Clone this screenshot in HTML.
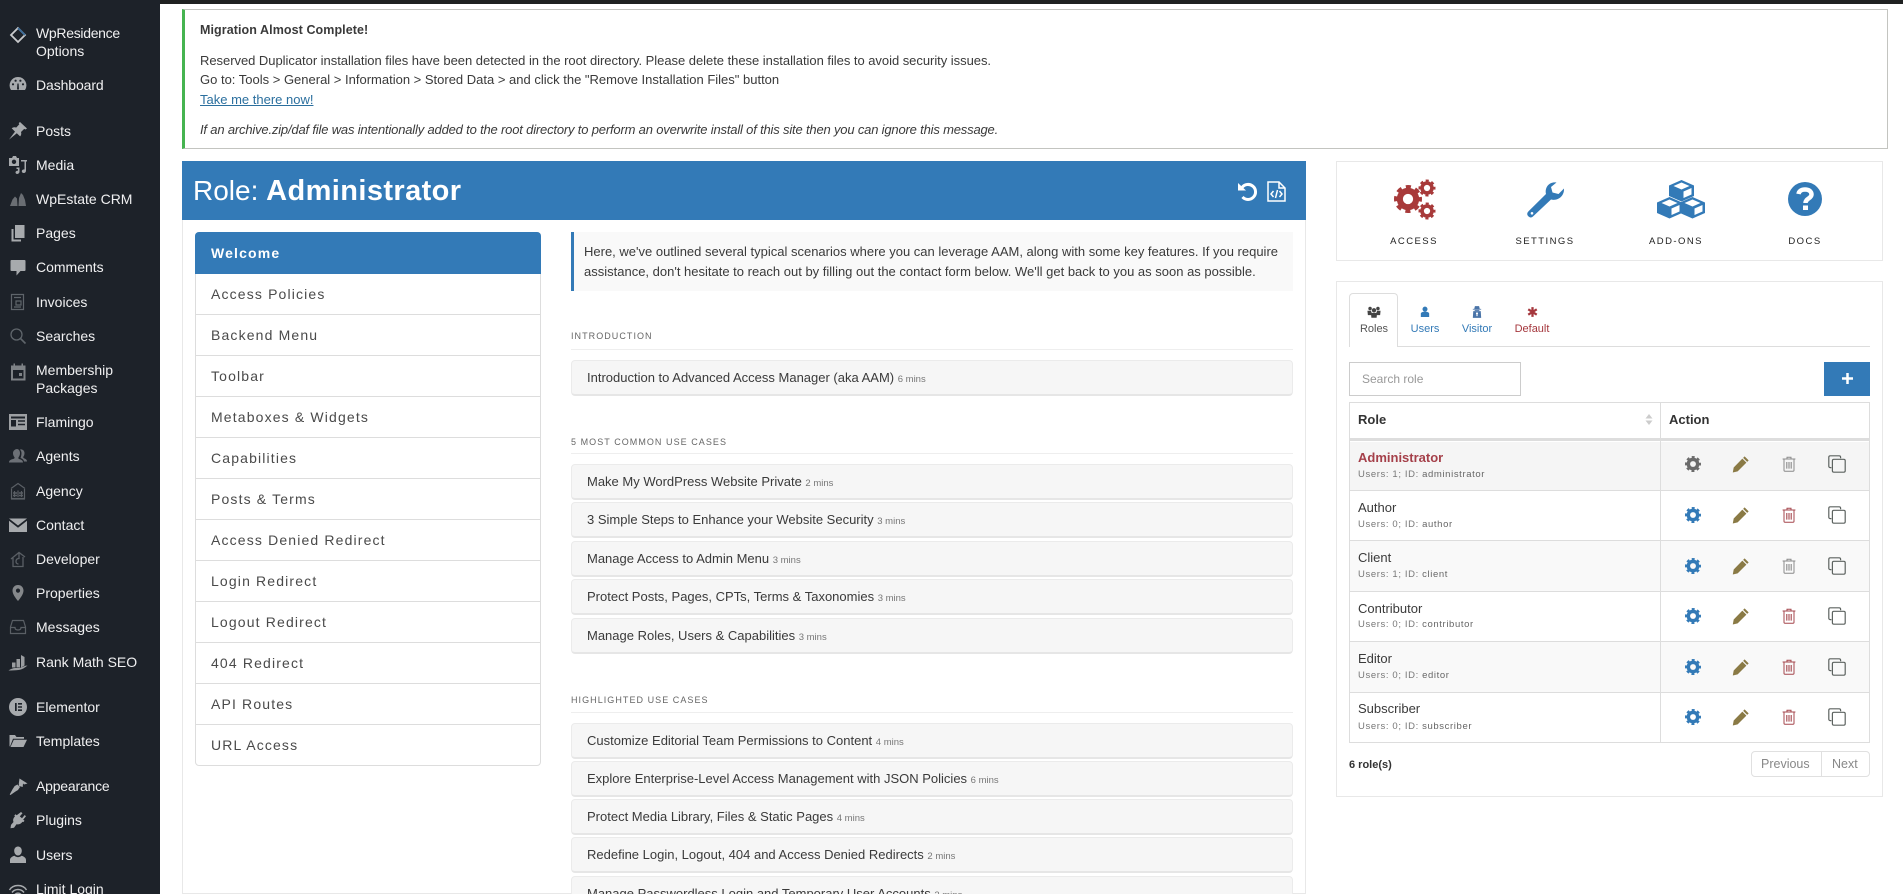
<!DOCTYPE html>
<html><head><meta charset="utf-8"><title>Role: Administrator</title>
<style>
html,body{margin:0;padding:0;width:1904px;height:894px;overflow:hidden;background:#fff;font-family:"Liberation Sans",sans-serif;color:#333}
#p{position:relative;width:1904px;height:894px;overflow:hidden;background:#fff}
.a{position:absolute}
.t{position:absolute;white-space:nowrap;line-height:20px;margin:0}
.s{color:#f0f0f1;font-size:14px;left:36px}
.n{font-size:13px;color:#3a3a3a}
.m{font-size:14px;letter-spacing:1.15px;left:211px;color:#4a4a4a}
.h{font-size:9px;letter-spacing:1.05px;left:571px;color:#666}
.hr{position:absolute;left:571px;width:722px;height:1px;background:#eee}
.it{position:absolute;left:571px;width:722px;height:36px;box-sizing:border-box;background:#f6f6f6;border:1px solid #ebebeb;border-bottom:2px solid #e6e6e6;border-radius:4px;font-size:13px;color:#3a3a3a;line-height:33px;padding-left:15px;white-space:nowrap}
.it small{font-size:9.5px;color:#777}
.lb{font-size:9.5px;letter-spacing:1.45px;color:#222;transform:translateX(-50%)}
.tb{font-size:11px;transform:translateX(-50%)}
.rn{font-size:13px;left:1358px;color:#3a3a3a}
.rs{font-size:9.5px;left:1358px;color:#777;letter-spacing:.62px}
.rs b{font-weight:normal;color:#666}
.hl{position:absolute;left:1349px;width:520px;height:1px;background:#ddd}
.i{position:absolute;overflow:visible}
svg{display:block}
.c{color:#a7aaad}.d{color:#5f656b}
</style></head><body><div id="p">
<svg width="0" height="0" style="position:absolute"><defs>
<symbol id="gear" viewBox="0 0 24 24"><circle cx="12" cy="12" r="7" fill="none" stroke="currentColor" stroke-width="5.2"/><circle cx="12" cy="12" r="10" fill="none" stroke="currentColor" stroke-width="4" stroke-dasharray="4.2 3.654" stroke-dashoffset="2.1"/></symbol>
<symbol id="pen" viewBox="0 0 16 16"><path fill="currentColor" d="M11.2 1.2l3.6 3.6-1.3 1.3-3.6-3.6zM9.2 3.2l3.6 3.6-7.8 7.8-4.3.9.8-4.4z"/></symbol>
<symbol id="trash" viewBox="0 0 14 16"><path fill="none" stroke="currentColor" stroke-width="1" d="M.6 3h12.8M5 3V1.200h4V3M2 3v11.200c0 .6.4 1 1 1h8c.6 0 1-.4 1-1V3"/><path fill="none" stroke="currentColor" stroke-width="1.1" d="M4.800 6v6.600M7 6v6.600M9.200 6v6.600"/></symbol>
<symbol id="copy" viewBox="0 0 18 18"><path fill="none" stroke="currentColor" stroke-width="1.2" d="M3.4 12.600H2.200c-.8 0-1.400-.6-1.400-1.400V2.200C.8 1.400 1.400.8 2.200.8h9c.8 0 1.400.6 1.400 1.400v1.100"/><rect x="4.400" y="4.300" width="12.800" height="12.900" rx="1.400" fill="none" stroke="currentColor" stroke-width="1.200"/></symbol>
<symbol id="cube" viewBox="0 0 25 22"><path fill="#337ab7" d="M12.500 0L25 5.500V16L12.500 21.500 0 16V5.500z"/><path fill="#fff" d="M12.500 2.500L20.500 6l-8 3.500L4.500 6zM14.500 11.500L22.500 8v6.500L14.500 18z"/></symbol>
</defs></svg>

<!-- top bar & sidebar -->
<div class="a" style="left:0;top:0;width:1903px;height:4px;background:#1f2121"></div>
<div class="a" style="left:0;top:0;width:160px;height:894px;background:#1d2229"></div>

<svg class="i" style="left:8px;top:25px" width="20" height="20" viewBox="0 0 20 20"><path fill="none" stroke="#c9cbcd" stroke-width="1.800" d="M10 3L3 10l7 7 7-7z"/><path fill="none" stroke="#3c6d9b" stroke-width="1.800" d="M10 3l7 7"/></svg>
<svg class="i c" style="left:8px;top:75px" width="20" height="20" viewBox="0 0 20 20"><path fill="currentColor" fill-rule="evenodd" d="M10 2a8.400 8.400 0 0 0-7 13h14A8.400 8.400 0 0 0 10 2zM5 10.400a1.100 1.100 0 1 1 0-2.200 1.100 1.100 0 0 1 0 2.200zm2.600-3.600a1.100 1.100 0 1 1 0-2.200 1.100 1.100 0 0 1 0 2.200zM12.400 6.800a1.100 1.100 0 1 1 0-2.200 1.100 1.100 0 0 1 0 2.200zM15 10.400a1.100 1.100 0 1 1 0-2.200 1.100 1.100 0 0 1 0 2.200zM9 14.500l.4-6h1.200l.4 6z"/></svg>
<svg class="i c" style="left:8px;top:121px" width="20" height="20" viewBox="0 0 20 20"><path fill="currentColor" d="M12 1l7 6.500-1.600 1-1.200-.6-3.200 3.100c.6 2 .1 3.300-.9 4.400L8.800 12.200 1 18.600l6-8L3.700 7.300c1.200-1 2.700-1.400 4.600-.8l3-3.200-.6-1.200z"/></svg>
<svg class="i c" style="left:8px;top:155px" width="20" height="20" viewBox="0 0 20 20"><path fill="currentColor" fill-rule="evenodd" d="M1 3h3l1-2h3l1 2h2v8H1zm5 6a2.200 2.200 0 1 0 0-4.400A2.200 2.200 0 0 0 6 9z"/><path fill="currentColor" d="M13 5h6v1.500h-1v9c0 1.500-1 2.500-2.300 2.500-1.100 0-1.900-.7-1.900-1.700 0-1.100 1-1.900 2.700-1.900V6.500H13zM8.500 12.500h3v4.300c0 1.200-1 2.200-2.200 2.200-1.100 0-1.800-.7-1.800-1.600 0-1 .9-1.700 1.900-1.700h.5V14H8.500z"/></svg>
<svg class="i" style="left:8px;top:189px;color:#6a6e73" width="20" height="20" viewBox="0 0 20 20"><path fill="currentColor" d="M2 17l2.500-6.500L7 7.500l2 2 .5 7.500zM10.500 17l.5-8 2-5 2 2 2 5 1 6z"/></svg>
<svg class="i c" style="left:8px;top:223px" width="20" height="20" viewBox="0 0 20 20"><path fill="currentColor" d="M7 2h9.500v13H7z"/><path fill="currentColor" d="M3.500 6H5.500v10.500H13V18.500H3.500z"/></svg>
<svg class="i c" style="left:8px;top:257px" width="20" height="20" viewBox="0 0 20 20"><path fill="currentColor" d="M3.500 3h13c.6 0 1 .4 1 1v9c0 .6-.4 1-1 1h-4L8.500 18.500V14H3.500c-.6 0-1-.4-1-1V4c0-.6.4-1 1-1z"/></svg>
<svg class="i" style="left:8px;top:292px;color:#5f656b" width="20" height="20" viewBox="0 0 20 20"><path fill="none" stroke="currentColor" stroke-width="1.200" d="M3.500 2.500h12v15h-12zM6 5.500h7M8 9h5v4H8zM6 15h7"/></svg>
<svg class="i" style="left:8px;top:326px;color:#5f656b" width="20" height="20" viewBox="0 0 20 20"><circle cx="8.500" cy="8.500" r="5.500" fill="none" stroke="currentColor" stroke-width="1.300"/><path stroke="currentColor" stroke-width="1.600" d="M12.500 12.500l5 5"/></svg>
<svg class="i" style="left:8px;top:362px;color:#7e8286" width="20" height="20" viewBox="0 0 20 20"><path fill="none" stroke="currentColor" stroke-width="2" d="M4 5h12.500v12.500H4z"/><path fill="currentColor" d="M3 3.500h14.500V8H3zM5.500 1.500h1.500v3H5.500zM13.500 1.500H15v3h-1.500zM11 11h3v3h-3z"/></svg>
<svg class="i c" style="left:8px;top:412px;color:#9da0a3" width="20" height="20" viewBox="0 0 20 20"><path fill="currentColor" fill-rule="evenodd" d="M1 2h18v16H1zM3 8v6.500h5V8zm7 .2v1.600h7V8.200zm0 3.500v1.600h7v-1.600zM3 4.500v2h14v-2z"/></svg>
<svg class="i" style="left:8px;top:446px;color:#6c7076" width="20" height="20" viewBox="0 0 20 20"><path fill="currentColor" d="M5 13c-2.500.6-4 1.500-4 3.500h14c0-2-1.500-2.900-4-3.500-.8-.3-.8-1.200-.3-2 .9-1.200 1.300-2.500 1.300-4 0-2.500-1.500-4-3-4S5 4.500 5 7c0 1.500.4 2.800 1.300 4 .5.800.5 1.700-1.300 2z"/><path fill="currentColor" d="M12 3.500c2-.5 4.500.8 4.500 3.500 0 1.500-.4 2.800-1.200 3.800-.3.800.2 1.300 1.200 1.700 1.400.6 2.500 1.300 2.500 3h-3c-.3-2-2-3-3.500-3.500.8-2 1.500-5 .5-7z"/></svg>
<svg class="i" style="left:8px;top:481px;color:#5a5f65" width="20" height="20" viewBox="0 0 20 20"><path fill="none" stroke="currentColor" stroke-width="1.200" d="M3 7.500L10 2.500l7 5M3.500 8v9.500h13V8M3 18h14M6.500 10v6M10 9.500v6.500M13.500 10v6"/><path fill="none" stroke="currentColor" stroke-width="1.500" d="M5 12h4M11 12h4M5 14.500h4M11 14.500h4"/></svg>
<svg class="i c" style="left:8px;top:515px" width="20" height="20" viewBox="0 0 20 20"><path fill="currentColor" d="M1 3.500h18l-9 7zM1 5.800l9 7 9-7V17H1z"/></svg>
<svg class="i" style="left:8px;top:549px;color:#5a5f65" width="20" height="20" viewBox="0 0 20 20"><path fill="none" stroke="currentColor" stroke-width="1.300" d="M3 10l8-6.500 6 4.500M5 9v8.500h10V8M11 3.500v6c-2 0-3 1.200-3 3 0 1.500 1 2.500 2.500 2.500"/></svg>
<svg class="i" style="left:8px;top:583px;color:#85888b" width="20" height="20" viewBox="0 0 20 20"><path fill="currentColor" fill-rule="evenodd" d="M10 2c3.200 0 5.500 2.400 5.500 5.500 0 3.500-3 7.500-5.500 10.500C7.500 15 4.500 11 4.500 7.500 4.500 4.400 6.800 2 10 2zm0 3.500a2.100 2.100 0 1 0 0 4.200 2.100 2.100 0 0 0 0-4.200z"/></svg>
<svg class="i" style="left:8px;top:617px;color:#5a5f65" width="20" height="20" viewBox="0 0 20 20"><path fill="none" stroke="currentColor" stroke-width="1.200" d="M2.500 10l2-6.500h11l2 6.500v6.500h-15zM2.500 10.500H7c0 1.800 1.300 2.500 3 2.500s3-.7 3-2.500h4.500"/></svg>
<svg class="i" style="left:8px;top:652px;color:#9a9da0" width="20" height="20" viewBox="0 0 20 20"><path fill="currentColor" d="M4 10.500h3.500v5H4zM8.500 7h3.500v8.500H8.500zM13 3l3.500 2v8.500L13 15.500zM.5 18.500c2-1.500 4.500-2.500 7-2.500s5 .3 8-1.500c1.300-.6 2.700-1 4-1-2.500 2-5 4-9 4.500-3.500.4-7 .5-10 .5z"/></svg>
<svg class="i" style="left:8px;top:697px;color:#a7aaad" width="20" height="20" viewBox="0 0 20 20"><path fill="currentColor" fill-rule="evenodd" d="M10 1a9 9 0 1 0 0 18 9 9 0 0 0 0-18zM7 6h1.700v8H7zm3 0h4v1.600h-4zm0 3.200h4v1.600h-4zm0 3.200h4V14h-4z"/></svg>
<svg class="i c" style="left:8px;top:731px" width="20" height="20" viewBox="0 0 20 20"><path fill="currentColor" d="M1.500 4h5.500l1.500 2h7.500v1.800H5L2 15.500 1.500 15zM5.800 8.800H19L15.500 16H2.500z"/></svg>
<svg class="i c" style="left:8px;top:776px" width="20" height="20" viewBox="0 0 20 20"><path fill="currentColor" d="M11.500 2.500l8 5-3.500 1-1-1-.3 3.500-3.700-1-.2-2.500zM9.500 8.500l2.500 2.500-2 3-2.500 1.500-5 3.500-.8-.5 3-5.500 2-3z"/></svg>
<svg class="i c" style="left:8px;top:810px" width="20" height="20" viewBox="0 0 20 20"><path fill="currentColor" d="M13 2l1.500 1.200-2.700 3.200 2.200 1.800 2.700-3.200L18 6.200l-2.800 3.400 1.300 1.200-1.200 1.300-.8-.4c-1.500 2.200-3.800 3-6 2.500l-2.500 3.500-3.500.5.500-3.300L5.500 12c-.8-2-.2-4 1.500-5.600L6.300 5.500 7.500 4.300l1.200 1z"/></svg>
<svg class="i c" style="left:8px;top:845px" width="20" height="20" viewBox="0 0 20 20"><path fill="currentColor" d="M10 1.500c2.300 0 3.800 1.800 3.800 4.300S12.300 10.500 10 10.500 6.200 8.300 6.200 5.800 7.700 1.500 10 1.500zM2 18v-3c0-2 2-3.500 4.500-4.200 1 .9 2.200 1.400 3.500 1.400s2.500-.5 3.500-1.400C16 11.500 18 13 18 15v3z"/></svg>
<svg class="i c" style="left:8px;top:879px" width="20" height="20" viewBox="0 0 20 20"><path fill="none" stroke="currentColor" stroke-width="1.500" d="M1.500 11C5 5 15 5 18.500 11M4 13.500c3-4 9-4 12 0M6.500 16c2-2.500 5-2.500 7 0"/></svg>

<div class="t s" style="top:23px;letter-spacing:-.3px">WpResidence</div><div class="t s" style="top:41px">Options</div>
<div class="t s" style="top:75px;letter-spacing:-.1px">Dashboard</div>
<div class="t s" style="top:121px">Posts</div>
<div class="t s" style="top:155px">Media</div>
<div class="t s" style="top:189px">WpEstate CRM</div>
<div class="t s" style="top:223px">Pages</div>
<div class="t s" style="top:257px">Comments</div>
<div class="t s" style="top:292px">Invoices</div>
<div class="t s" style="top:326px">Searches</div>
<div class="t s" style="top:360px">Membership</div><div class="t s" style="top:378px">Packages</div>
<div class="t s" style="top:412px">Flamingo</div>
<div class="t s" style="top:446px">Agents</div>
<div class="t s" style="top:481px">Agency</div>
<div class="t s" style="top:515px">Contact</div>
<div class="t s" style="top:549px">Developer</div>
<div class="t s" style="top:583px">Properties</div>
<div class="t s" style="top:617px">Messages</div>
<div class="t s" style="top:652px">Rank Math SEO</div>
<div class="t s" style="top:697px">Elementor</div>
<div class="t s" style="top:731px">Templates</div>
<div class="t s" style="top:776px;letter-spacing:-.2px">Appearance</div>
<div class="t s" style="top:810px">Plugins</div>
<div class="t s" style="top:845px">Users</div>
<div class="t s" style="top:879px">Limit Login</div>

<!-- notice -->
<div class="a" style="left:182px;top:9px;width:1706px;height:140px;box-sizing:border-box;background:#fff;border:1px solid #c3c4c0;border-left:3px solid #46b450"></div>
<div class="t n" style="left:200px;top:20px;font-weight:bold;font-size:12.5px;letter-spacing:.08px">Migration Almost Complete!</div>
<div class="t n" style="left:200px;top:51px;letter-spacing:-.035px">Reserved Duplicator installation files have been detected in the root directory. Please delete these installation files to avoid security issues.</div>
<div class="t n" style="left:200px;top:70px">Go to: Tools &gt; General &gt; Information &gt; Stored Data &gt; and click the "Remove Installation Files" button</div>
<div class="t n" style="left:200px;top:90px;color:#2b6f9e;text-decoration:underline">Take me there now!</div>
<div class="t n" style="left:200px;top:120px;font-style:italic;letter-spacing:-.18px">If an archive.zip/daf file was intentionally added to the root directory to perform an overwrite install of this site then you can ignore this message.</div>

<!-- main panel -->
<div class="a" style="left:182px;top:161px;width:1124px;height:733px;box-sizing:border-box;border:1px solid #e8e8e8;border-top:0"></div>
<div class="a" style="left:182px;top:161px;width:1124px;height:59px;background:#337ab7"></div>
<div class="t" style="left:193px;top:171px;color:#fff;font-size:28px;line-height:40px">Role: <b style="letter-spacing:.4px;font-size:29px">Administrator</b></div>
<svg class="i" style="left:1238px;top:182px" width="19" height="19" viewBox="0 0 19 19"><path fill="none" stroke="#fff" stroke-width="3" d="M4 5.500A7.500 7.500 0 1 1 4.500 15"/><path fill="#fff" d="M0 1l8 7.500H0z"/></svg>
<svg class="i" style="left:1267px;top:181px" width="19" height="21" viewBox="0 0 19 21"><path fill="none" stroke="#fff" stroke-width="1.500" d="M1 1h11l6 6v13H1z"/><path fill="none" stroke="#fff" stroke-width="1.500" d="M12 1v6h6M6.500 10l-2.500 3 2.500 3M12.500 10l2.500 3-2.500 3M10.500 9l-2 8"/></svg>

<!-- left menu -->
<div class="a" style="left:195px;top:232px;width:346px;height:534px;box-sizing:border-box;border:1px solid #ddd;border-radius:4px"></div>
<div class="a" style="left:195px;top:232px;width:346px;height:42px;background:#337ab7;border-radius:4px 4px 0 0"></div>
<div class="a" style="left:196px;top:314px;width:344px;height:1px;background:#ddd"></div>
<div class="a" style="left:196px;top:355px;width:344px;height:1px;background:#ddd"></div>
<div class="a" style="left:196px;top:396px;width:344px;height:1px;background:#ddd"></div>
<div class="a" style="left:196px;top:437px;width:344px;height:1px;background:#ddd"></div>
<div class="a" style="left:196px;top:478px;width:344px;height:1px;background:#ddd"></div>
<div class="a" style="left:196px;top:519px;width:344px;height:1px;background:#ddd"></div>
<div class="a" style="left:196px;top:560px;width:344px;height:1px;background:#ddd"></div>
<div class="a" style="left:196px;top:601px;width:344px;height:1px;background:#ddd"></div>
<div class="a" style="left:196px;top:642px;width:344px;height:1px;background:#ddd"></div>
<div class="a" style="left:196px;top:683px;width:344px;height:1px;background:#ddd"></div>
<div class="a" style="left:196px;top:724px;width:344px;height:1px;background:#ddd"></div>
<div class="t m" style="top:243px;color:#fff;font-weight:bold">Welcome</div>
<div class="t m" style="top:284px">Access Policies</div>
<div class="t m" style="top:325px">Backend Menu</div>
<div class="t m" style="top:366px">Toolbar</div>
<div class="t m" style="top:407px">Metaboxes &amp; Widgets</div>
<div class="t m" style="top:448px">Capabilities</div>
<div class="t m" style="top:489px">Posts &amp; Terms</div>
<div class="t m" style="top:530px">Access Denied Redirect</div>
<div class="t m" style="top:571px">Login Redirect</div>
<div class="t m" style="top:612px">Logout Redirect</div>
<div class="t m" style="top:653px">404 Redirect</div>
<div class="t m" style="top:694px">API Routes</div>
<div class="t m" style="top:735px">URL Access</div>

<!-- intro -->
<div class="a" style="left:571px;top:232px;width:722px;height:59px;background:#f9f9f9;box-sizing:border-box;border-left:3px solid #337ab7"></div>
<div class="t n" style="left:584px;top:242px">Here, we've outlined several typical scenarios where you can leverage AAM, along with some key features. If you require</div>
<div class="t n" style="left:584px;top:262px">assistance, don't hesitate to reach out by filling out the contact form below. We'll get back to you as soon as possible.</div>

<div class="t h" style="top:326px">INTRODUCTION</div><div class="hr" style="top:349px"></div>
<div class="it" style="top:360px">Introduction to Advanced Access Manager (aka AAM) <small>6 mins</small></div>

<div class="t h" style="top:432px">5 MOST COMMON USE CASES</div><div class="hr" style="top:453px"></div>
<div class="it" style="top:464px">Make My WordPress Website Private <small>2 mins</small></div>
<div class="it" style="top:502px">3 Simple Steps to Enhance your Website Security <small>3 mins</small></div>
<div class="it" style="top:541px">Manage Access to Admin Menu <small>3 mins</small></div>
<div class="it" style="top:579px">Protect Posts, Pages, CPTs, Terms &amp; Taxonomies <small>3 mins</small></div>
<div class="it" style="top:618px">Manage Roles, Users &amp; Capabilities <small>3 mins</small></div>

<div class="t h" style="top:690px">HIGHLIGHTED USE CASES</div><div class="hr" style="top:712px"></div>
<div class="it" style="top:723px">Customize Editorial Team Permissions to Content <small>4 mins</small></div>
<div class="it" style="top:761px">Explore Enterprise-Level Access Management with JSON Policies <small>6 mins</small></div>
<div class="it" style="top:799px">Protect Media Library, Files &amp; Static Pages <small>4 mins</small></div>
<div class="it" style="top:837px">Redefine Login, Logout, 404 and Access Denied Redirects <small>2 mins</small></div>
<div class="it" style="top:876px">Manage Passwordless Login and Temporary User Accounts <small>2 mins</small></div>

<!-- right top panel -->
<div class="a" style="left:1336px;top:161px;width:547px;height:100px;box-sizing:border-box;border:1px solid #e8e8e8"></div>
<svg class="i" style="left:1390px;top:178px;color:#a83a3a" width="50" height="42" viewBox="0 0 50 42">
<use href="#gear" x="4" y="7" width="28" height="28"/><use href="#gear" x="28.5" y="1.5" width="17" height="17"/><use href="#gear" x="28.5" y="24.5" width="17" height="17"/></svg>
<svg class="i" style="left:1527px;top:182px" width="37" height="36" viewBox="0 0 37 36"><path fill="#337ab7" fill-rule="evenodd" d="M29.500.5C22.500-.5 17.500 5 19 12L1.800 29c-2 2-2 3.500-.5 5.300 1.700 1.700 3.500 1.500 5.200-.3L24 17.500c7 1.700 13.500-3.500 13-11L31.500 12l-6-1.500L24 5zM5 30a1.300 1.300 0 1 0 0 2.600A1.300 1.300 0 0 0 5 30z"/></svg>
<svg class="i" style="left:1657px;top:180px" width="48" height="39" viewBox="0 0 48 39">
<use href="#cube" x="12" y="0" width="25" height="22"/><use href="#cube" x="0" y="17" width="25" height="22"/><use href="#cube" x="23" y="17" width="25" height="22"/></svg>
<svg class="i" style="left:1788px;top:182px" width="34" height="34" viewBox="0 0 34 34"><circle cx="17" cy="17" r="17" fill="#337ab7"/><path fill="none" stroke="#fff" stroke-width="4.500" d="M10.500 12c.5-3 3-4.500 6.500-4.500 4 0 6.500 2 6.500 5 0 4-6 4-6 8.500"/><rect x="15" y="23.500" width="5" height="4.500" fill="#fff"/></svg>
<div class="t lb" style="left:1414px;top:232px">ACCESS</div>
<div class="t lb" style="left:1545px;top:232px">SETTINGS</div>
<div class="t lb" style="left:1676px;top:232px">ADD-ONS</div>
<div class="t lb" style="left:1805px;top:232px">DOCS</div>

<!-- right panel -->
<div class="a" style="left:1336px;top:281px;width:547px;height:516px;box-sizing:border-box;border:1px solid #e8e8e8"></div>
<div class="a" style="left:1349px;top:346px;width:521px;height:1px;background:#ddd"></div>
<div class="a" style="left:1349px;top:293px;width:49px;height:54px;box-sizing:border-box;background:#fff;border:1px solid #ddd;border-bottom:0;border-radius:4px 4px 0 0"></div>
<svg class="i" style="left:1367px;top:306px" width="14" height="12" viewBox="0 0 16 13"><g fill="#444"><circle cx="3.500" cy="2.500" r="2"/><circle cx="12.500" cy="2.500" r="2"/><circle cx="8" cy="4.500" r="2.500"/><path d="M.5 5h4l1 3v2H1zM11.500 5h4l-.5 5h-4.500V8zM4.500 7.500h7l-.5 5.500H5z"/></g></svg>
<svg class="i" style="left:1420px;top:306px" width="10" height="12" viewBox="0 0 12 14"><g fill="#337ab7"><circle cx="6" cy="3.500" r="3"/><path d="M1 13V9c0-1.500 2-2.500 5-2.500s5 1 5 2.500v4z"/></g></svg>
<svg class="i" style="left:1472px;top:306px" width="10" height="12" viewBox="0 0 12 14"><path fill="#4a74a8" fill-rule="evenodd" d="M3.500 0h5l.8 3.200H11v1H1v-1h1.700zM1.500 6h9l.5 8H1zM6 7.500a1.300 1.300 0 0 0-.5 2.500l-.3 2h1.600l-.3-2A1.300 1.300 0 0 0 6 7.500zM3.200 4.500h5.600v1.200H3.200z"/></svg>
<svg class="i" style="left:1528px;top:307px" width="9" height="10" viewBox="0 0 11 12"><path stroke="#a5373d" stroke-width="2.800" d="M5.500 0v12M.3 2.700l10.400 6.600M10.700 2.700L.3 9.300"/></svg>
<div class="t tb" style="left:1374px;top:319px;color:#555">Roles</div>
<div class="t tb" style="left:1425px;top:319px;color:#337ab7">Users</div>
<div class="t tb" style="left:1477px;top:319px;color:#337ab7">Visitor</div>
<div class="t tb" style="left:1532px;top:319px;color:#a5373d">Default</div>

<div class="a" style="left:1349px;top:362px;width:172px;height:34px;box-sizing:border-box;border:1px solid #ccc"></div>
<div class="t" style="left:1362px;top:369px;font-size:12px;color:#999">Search role</div>
<div class="a" style="left:1824px;top:362px;width:46px;height:34px;background:#337ab7"></div>
<svg class="i" style="left:1842px;top:373px" width="11" height="11" viewBox="0 0 11 11"><path stroke="#fff" stroke-width="2.500" d="M5.500 0v11M0 5.500h11"/></svg>

<!-- table -->
<div class="a" style="left:1349px;top:442px;width:520px;height:48px;background:#f5f5f5"></div>
<div class="a" style="left:1349px;top:541px;width:520px;height:50px;background:#f9f9f9"></div>
<div class="a" style="left:1349px;top:642px;width:520px;height:50px;background:#f9f9f9"></div>
<div class="a" style="left:1349px;top:402px;width:521px;height:341px;box-sizing:border-box;border:1px solid #ddd"></div>
<div class="a" style="left:1660px;top:402px;width:1px;height:341px;background:#ddd"></div>
<div class="a" style="left:1349px;top:438px;width:520px;height:3px;background:#ddd"></div>
<div class="hl" style="top:490px"></div><div class="hl" style="top:540px"></div><div class="hl" style="top:591px"></div><div class="hl" style="top:641px"></div><div class="hl" style="top:692px"></div>
<div class="t" style="left:1358px;top:410px;font-size:13px;font-weight:bold">Role</div>
<div class="t" style="left:1669px;top:410px;font-size:13px;font-weight:bold">Action</div>
<svg class="i" style="left:1645px;top:414px" width="8" height="11" viewBox="0 0 8 11"><path fill="#ccc" d="M4 0l3.500 4.500h-7zM4 11L.5 6.500h7z"/></svg>

<div class="t rn" style="top:448px;font-weight:bold;color:#a5404a">Administrator</div><div class="t rs" style="top:465px">Users: 1; ID: <b>administrator</b></div>
<div class="t rn" style="top:498px">Author</div><div class="t rs" style="top:515px">Users: 0; ID: <b>author</b></div>
<div class="t rn" style="top:548px">Client</div><div class="t rs" style="top:565px">Users: 1; ID: <b>client</b></div>
<div class="t rn" style="top:599px">Contributor</div><div class="t rs" style="top:615px">Users: 0; ID: <b>contributor</b></div>
<div class="t rn" style="top:649px">Editor</div><div class="t rs" style="top:666px">Users: 0; ID: <b>editor</b></div>
<div class="t rn" style="top:699px">Subscriber</div><div class="t rs" style="top:717px">Users: 0; ID: <b>subscriber</b></div>

<svg class="i" style="left:1685px;top:456px;color:#6b6b6b" width="16" height="16"><use href="#gear" width="16" height="16"/></svg>
<svg class="i" style="left:1732px;top:455px;color:#8a7a45" width="18" height="18"><use href="#pen" width="18" height="18"/></svg>
<svg class="i" style="left:1782px;top:456px;color:#8a8a8a" width="14" height="16"><use href="#trash" width="14" height="16"/></svg>
<svg class="i" style="left:1828px;top:455px;color:#5d6360" width="18" height="18"><use href="#copy" width="18" height="18"/></svg>

<svg class="i" style="left:1685px;top:507px;color:#337ab7" width="16" height="16"><use href="#gear" width="16" height="16"/></svg>
<svg class="i" style="left:1732px;top:506px;color:#8a7a45" width="18" height="18"><use href="#pen" width="18" height="18"/></svg>
<svg class="i" style="left:1782px;top:507px;color:#a5474d" width="14" height="16"><use href="#trash" width="14" height="16"/></svg>
<svg class="i" style="left:1828px;top:506px;color:#5d6360" width="18" height="18"><use href="#copy" width="18" height="18"/></svg>

<svg class="i" style="left:1685px;top:558px;color:#337ab7" width="16" height="16"><use href="#gear" width="16" height="16"/></svg>
<svg class="i" style="left:1732px;top:557px;color:#8a7a45" width="18" height="18"><use href="#pen" width="18" height="18"/></svg>
<svg class="i" style="left:1782px;top:558px;color:#8a8a8a" width="14" height="16"><use href="#trash" width="14" height="16"/></svg>
<svg class="i" style="left:1828px;top:557px;color:#5d6360" width="18" height="18"><use href="#copy" width="18" height="18"/></svg>

<svg class="i" style="left:1685px;top:608px;color:#337ab7" width="16" height="16"><use href="#gear" width="16" height="16"/></svg>
<svg class="i" style="left:1732px;top:607px;color:#8a7a45" width="18" height="18"><use href="#pen" width="18" height="18"/></svg>
<svg class="i" style="left:1782px;top:608px;color:#a5474d" width="14" height="16"><use href="#trash" width="14" height="16"/></svg>
<svg class="i" style="left:1828px;top:607px;color:#5d6360" width="18" height="18"><use href="#copy" width="18" height="18"/></svg>

<svg class="i" style="left:1685px;top:659px;color:#337ab7" width="16" height="16"><use href="#gear" width="16" height="16"/></svg>
<svg class="i" style="left:1732px;top:658px;color:#8a7a45" width="18" height="18"><use href="#pen" width="18" height="18"/></svg>
<svg class="i" style="left:1782px;top:659px;color:#a5474d" width="14" height="16"><use href="#trash" width="14" height="16"/></svg>
<svg class="i" style="left:1828px;top:658px;color:#5d6360" width="18" height="18"><use href="#copy" width="18" height="18"/></svg>

<svg class="i" style="left:1685px;top:709px;color:#337ab7" width="16" height="16"><use href="#gear" width="16" height="16"/></svg>
<svg class="i" style="left:1732px;top:708px;color:#8a7a45" width="18" height="18"><use href="#pen" width="18" height="18"/></svg>
<svg class="i" style="left:1782px;top:709px;color:#a5474d" width="14" height="16"><use href="#trash" width="14" height="16"/></svg>
<svg class="i" style="left:1828px;top:708px;color:#5d6360" width="18" height="18"><use href="#copy" width="18" height="18"/></svg>

<div class="t" style="left:1349px;top:755px;font-size:11px;font-weight:bold;color:#333">6 role(s)</div>
<div class="a" style="left:1751px;top:751px;width:119px;height:26px;box-sizing:border-box;border:1px solid #e0e0e0;border-radius:4px"></div>
<div class="a" style="left:1821px;top:752px;width:1px;height:24px;background:#e0e0e0"></div>
<div class="t" style="left:1761px;top:754px;font-size:12.5px;color:#888">Previous</div>
<div class="t" style="left:1832px;top:754px;font-size:12.5px;color:#888">Next</div>
</div></body></html>
